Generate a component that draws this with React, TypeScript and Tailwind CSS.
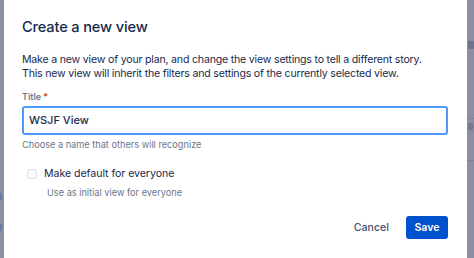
import React from "react";

export default function App() {
  return (
    <div
      className="w-[474px] h-[258px] overflow-hidden bg-[#8b90a1] flex relative"
      style={{ fontFamily: "Inter, 'Liberation Sans', sans-serif" }}
    >
      {/* faint background content under overlay */}
      <div className="absolute left-[468px] top-[41px] w-[6px] h-[8px] bg-[#5a6480] opacity-60 rounded-[1px]" />
      <div className="absolute left-[468px] top-[123px] w-[5px] h-[7px] bg-[#5a6480] opacity-50 rounded-[1px]" />
      <div className="absolute left-[467px] top-[118px] w-[7px] h-px bg-[#7d8294]" />
      <div className="absolute left-[467px] top-[160px] w-[7px] h-px bg-[#7d8294]" />
      <div className="absolute left-0 top-[193px] w-[2px] h-[7px] bg-[#3a63b8] opacity-50" />
      <div className="absolute left-0 top-[224px] w-[2px] h-[7px] bg-[#3a63b8] opacity-50" />

      <div className="ml-[4px] w-[463px] h-full bg-white flex flex-col pl-[18px] pr-[19px] text-[#172b4d]">
        <h1 className="mt-[18px] text-[14.6px] leading-[18px] font-medium tracking-[-0.15px] whitespace-nowrap">
          Create a new view
        </h1>
        <p className="mt-[17px] text-[10.6px] leading-[13.5px] tracking-[-0.2px] whitespace-nowrap">
          Make a new view of your plan, and change the view settings to tell a different story.
          <br />
          This new view will inherit the filters and settings of the currently selected view.
        </p>
        <label className="mt-[11px] text-[9px] leading-[11px] font-semibold text-[#6b778c] flex">
          Title<span className="text-[#de350b] ml-[2px]">*</span>
        </label>
        <div className="mt-[4px] h-[29px] border-2 border-[#4c9aff] rounded-[3px] flex items-center pl-[5px] text-[11px] font-medium text-[#172b4d]">
          WSJF View
        </div>
        <div className="mt-[4px] text-[9.2px] leading-[11px] text-[#6b778c] whitespace-nowrap">
          Choose a name that others will recognize
        </div>
        <div className="mt-[17px] flex items-center">
          <div className="ml-[5px] w-[10px] h-[10px] border border-[#dfe1e6] rounded-[2px] bg-[#fafbfc]" />
          <span className="ml-[7px] text-[10.6px] leading-[13px] tracking-[-0.05px] text-[#172b4d] whitespace-nowrap">
            Make default for everyone
          </span>
        </div>
        <div className="mt-[7px] ml-[25px] text-[9.2px] leading-[11px] text-[#6b778c] whitespace-nowrap">
          Use as initial view for everyone
        </div>
        <div className="mt-[18px] flex justify-end items-center gap-[9px]">
          <button className="h-[23px] text-[10.6px] font-medium text-[#42526e] rounded-[3px]">
            Cancel
          </button>
          <button className="h-[23px] w-[42px] ml-[8px] text-[10.6px] font-semibold text-white bg-[#0052cc] rounded-[3px]">
            Save
          </button>
        </div>
      </div>
    </div>
  );
}
